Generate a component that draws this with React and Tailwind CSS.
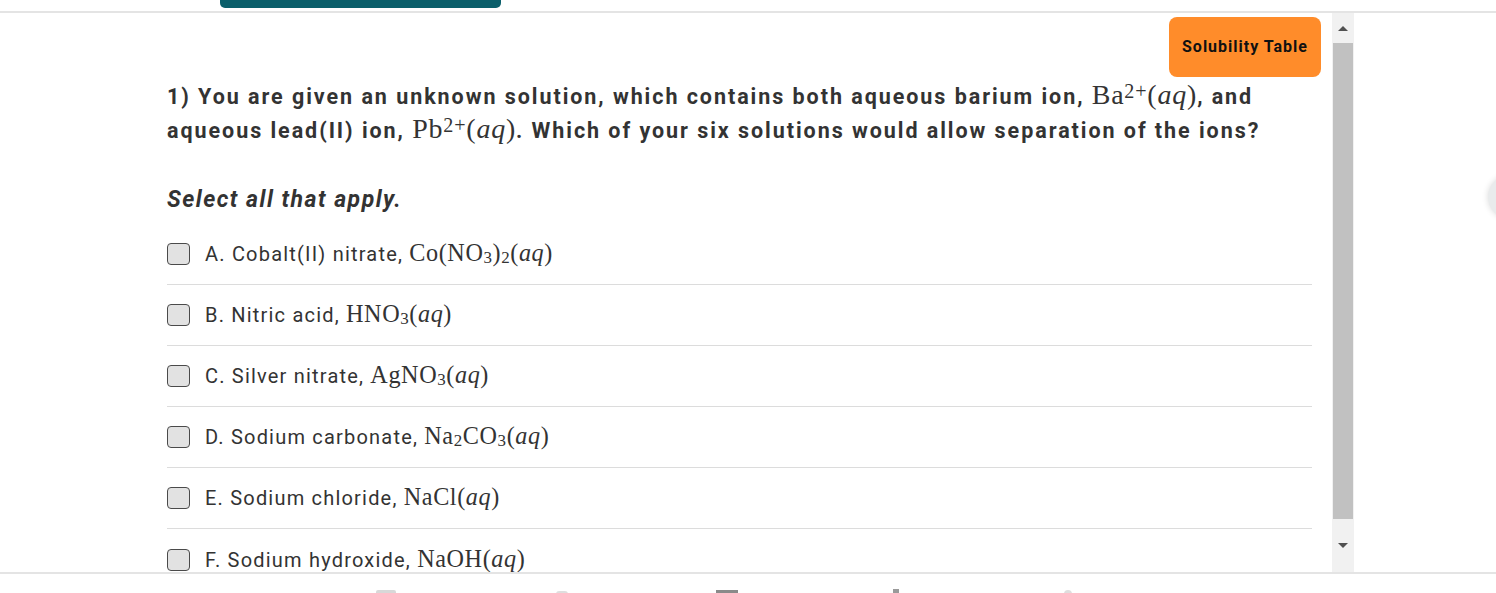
import React from 'react'

const serif = "font-['Liberation_Serif','Times_New_Roman',serif]"

// small inline chemistry formula, roughly how KaTeX prints it
const M = ({ children, className = 'text-[1.21em]' }) => (
  <span className={`${serif} leading-none ${className}`}>{children}</span>
)
const Sub = ({ children }) => <sub className="text-[0.7em] leading-none relative top-[0.12em]">{children}</sub>
const Sup = ({ children }) => <sup className="text-[0.72em] leading-none relative -top-[0.3em]">{children}</sup>
const Aq = () => (
  <>
    (<i>aq</i>)
  </>
)

const options = [
  {
    label: 'A. Cobalt(II) nitrate, ',
    formula: (
      <>
        Co(NO<Sub>3</Sub>)<Sub>2</Sub>
        <Aq />
      </>
    )
  },
  {
    label: 'B. Nitric acid, ',
    formula: (
      <>
        HNO<Sub>3</Sub>
        <Aq />
      </>
    )
  },
  {
    label: 'C. Silver nitrate, ',
    formula: (
      <>
        AgNO<Sub>3</Sub>
        <Aq />
      </>
    )
  },
  {
    label: 'D. Sodium carbonate, ',
    formula: (
      <>
        Na<Sub>2</Sub>CO<Sub>3</Sub>
        <Aq />
      </>
    )
  },
  {
    label: 'E. Sodium chloride, ',
    formula: (
      <>
        NaCl
        <Aq />
      </>
    )
  },
  {
    label: 'F. Sodium hydroxide, ',
    formula: (
      <>
        NaOH
        <Aq />
      </>
    )
  }
]

const Scrollbar = () => (
  <div className="w-[22px] bg-[#f1f1f1] flex flex-col items-center">
    <div className="h-[30px] w-full flex items-center justify-center">
      <div className="w-0 h-0 border-l-[5px] border-r-[5px] border-b-[5px] border-l-transparent border-r-transparent border-b-[#505050]" />
    </div>
    <div className="w-[20px] h-[476px] bg-[#c1c1c1]" />
    <div className="flex-1 w-full flex items-center justify-center">
      <div className="w-0 h-0 border-l-[5px] border-r-[5px] border-t-[5px] border-l-transparent border-r-transparent border-t-[#505050]" />
    </div>
  </div>
)

const App = () => {
  return (
    <div className="relative w-full h-[593px] bg-white overflow-hidden font-['Roboto','Liberation_Sans',sans-serif] text-[#333]">
      {/* top strip with tab */}
      <div className="h-[11px] pl-[220px]">
        <div className="w-[281px] h-[8px] bg-[#0b5f6b] rounded-b-[5px]" />
      </div>
      <div className="h-[2px] bg-[#e4e4e4]" />

      <div className="flex h-[559px]">
        {/* question panel */}
        <div className="relative w-[1332px] pl-[167px] pr-[20px] pt-[67px] overflow-hidden">
          <button className="absolute left-[1169px] top-[4px] w-[152px] h-[60px] rounded-[8px] bg-[#ff8c2a] text-[16px] font-bold text-[#111] tracking-[1px]">
            Solubility Table
          </button>

          <p className="text-[21.5px] leading-[34px] font-bold tracking-[1.95px] whitespace-nowrap">
            1) You are given an unknown solution, which contains both aqueous barium ion,{' '}
            <M className="text-[1.3em] font-normal tracking-[0.8px]">
              Ba<Sup>2+</Sup>
              <Aq />
            </M>
            , and
            <br />
            aqueous lead(II) ion,{' '}
            <M className="text-[1.3em] font-normal tracking-[0.8px]">
              Pb<Sup>2+</Sup>
              <Aq />
            </M>
            . Which of your six solutions would allow separation of the ions?
          </p>

          <p className="mt-[38px] text-[23px] leading-[28px] font-bold italic tracking-[1.5px]">Select all that apply.</p>

          <div className="mt-[10px]">
            {options.map(o => (
              <div key={o.label} className="h-[61px] flex items-center border-b border-[#dcdcdc] last:border-b-0">
                <span className="w-[23px] h-[22px] rounded-[4px] border-[1.5px] border-[#4a4a4a] bg-[#e2e2e2] shrink-0" />
                <span className="ml-[15px] text-[20px] tracking-[1.2px] text-[#333] whitespace-nowrap">
                  {o.label}
                  <M className="text-[1.21em] tracking-[0.6px]">{o.formula}</M>
                </span>
              </div>
            ))}
          </div>
        </div>

        <Scrollbar />
        <div className="flex-1" />
      </div>

      <div className="h-[2px] bg-[#e4e4e4]" />

      {/* tops of the bottom toolbar icons, cut off by the window */}
      <div className="flex items-end h-[20px] pt-[15px]">
        <div className="ml-[376px] w-[20px] h-[4px] bg-[#d8d8d8] rounded-t-[2px]" />
        <div className="ml-[160px] w-[12px] h-[3px] bg-[#dedede] rounded-t-full" />
        <div className="ml-[148px] w-[22px] h-[4px] bg-[#8a8a8a]" />
        <div className="ml-[155px] w-[6px] h-[5px] bg-[#9a9a9a]" />
        <div className="ml-[165px] w-[8px] h-[4px] bg-[#dedede] rounded-t-full" />
      </div>

      {/* floating round button at the right edge */}
      <div className="absolute left-[1488px] top-[175px] w-[44px] h-[44px] rounded-full bg-[#e9ebec] shadow-[0_0_6px_rgba(0,0,0,0.15)]" />
    </div>
  )
}

export default App
